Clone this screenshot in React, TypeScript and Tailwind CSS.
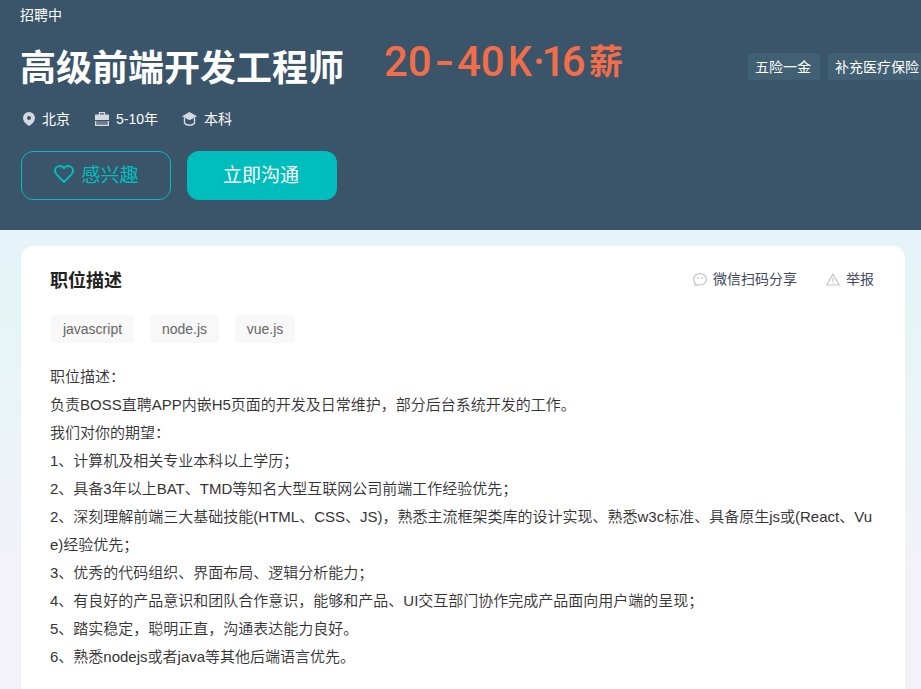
const skills = [
  { name: 'javascript', width: 'w-[83px]' },
  { name: 'node.js', width: 'w-[69px]' },
  { name: 'vue.js', width: 'w-[60px]' },
];

const description = [
  '职位描述：',
  '负责BOSS直聘APP内嵌H5页面的开发及日常维护，部分后台系统开发的工作。',
  '我们对你的期望：',
  '1、计算机及相关专业本科以上学历；',
  '2、具备3年以上BAT、TMD等知名大型互联网公司前端工作经验优先；',
  '2、深刻理解前端三大基础技能(HTML、CSS、JS)，熟悉主流框架类库的设计实现、熟悉w3c标准、具备原生js或(React、Vue)经验优先；',
  '3、优秀的代码组织、界面布局、逻辑分析能力；',
  '4、有良好的产品意识和团队合作意识，能够和产品、UI交互部门协作完成产品面向用户端的呈现；',
  '5、踏实稳定，聪明正直，沟通表达能力良好。',
  '6、熟悉nodejs或者java等其他后端语言优先。',
];

function PinIcon() {
  return (
    <svg width="12" height="14" viewBox="0 0 12 14" fill="#d3d9df">
      <path fillRule="evenodd" d="M6 0a6 6 0 0 1 6 6c0 3-2.200 5.200-4.200 6.700L6 14l-1.800-1.300C2.200 11.200 0 9 0 6a6 6 0 0 1 6-6Zm0 4a2 2 0 1 0 0 4 2 2 0 0 0 0-4Z" />
    </svg>
  );
}

function BriefcaseIcon() {
  return (
    <svg width="14" height="14" viewBox="0 0 14 14" fill="none" stroke="#d3d9df">
      <path d="M4.500 3V.6h5V3" strokeWidth="1.200" />
      <path d="M0 2.500h14V8H0Z" fill="#d3d9df" stroke="none" />
      <path d="M.6 9v4.400h12.800V9" strokeWidth="1.200" />
      <path d="M1 9h12v4H1Z" fill="#d3d9df" fillOpacity=".3" stroke="none" />
    </svg>
  );
}

function DegreeIcon() {
  return (
    <svg width="15" height="14" viewBox="0 0 15 14" fill="#d3d9df">
      <path d="M7.500 0 15 4.300 7.500 8.200 0 4.300Z" />
      <path d="M2.500 5.500v5.700c1.200 1.400 2.900 2 5 2s3.800-.6 5-2V5.500" fill="none" stroke="#d3d9df" strokeWidth="1.400" />
    </svg>
  );
}

function HeartIcon() {
  return (
    <svg width="20" height="18" viewBox="0 0 20 18" fill="none" stroke="#00bebd" strokeWidth="2" strokeLinejoin="round">
      <path d="M10 3.100C8.600 1.500 7.300 1 5.800 1 3.100 1 1 3.100 1 5.800c0 1.400.6 2.600 1.500 3.600L10 17l7.500-7.600c.9-1 1.500-2.200 1.500-3.600C19 3.100 16.900 1 14.200 1c-1.500 0-2.800.5-4.200 2.100Z" />
    </svg>
  );
}

function WechatIcon() {
  return (
    <svg width="14" height="13" viewBox="0 0 14 13" fill="none" stroke="#c4c4c4" strokeWidth="1.200">
      <path d="M2 12.200V10A5.600 5.600 0 0 1 .6 6.300C.6 3 3.400.6 7 .6s6.400 2.400 6.400 5.700S10.600 12 7 12c-1 0-1.700-.1-2.500-.4Z" strokeLinejoin="round" />
      <circle cx="4.700" cy="5.200" r=".9" fill="#c4c4c4" stroke="none" />
      <circle cx="9.300" cy="5.200" r=".9" fill="#c4c4c4" stroke="none" />
    </svg>
  );
}

function WarningIcon() {
  return (
    <svg width="14" height="13" viewBox="0 0 14 13" fill="none" stroke="#c4c4c4" strokeWidth="1.200">
      <path d="M7 1 13.300 12H.7Z" strokeLinejoin="round" />
      <path d="M7 4.500v4M7 9.500v1" />
    </svg>
  );
}

export default function App() {
  return (
    <div className="h-[689px] w-full overflow-hidden bg-[#f3f2f8] font-['Liberation_Sans','Noto_Sans_CJK_SC',sans-serif]">
      <header className="flex h-[230px] justify-between overflow-hidden bg-[#3a546a] pl-[21px] text-white">
        <div className="shrink-0">
          <div className="-ml-px mt-[5px] h-5 text-sm leading-5">招聘中</div>
          <div className="mt-[18px] flex h-[50px]">
            <h1 className="-ml-px w-[364px] text-[36px] leading-[52px] font-bold">高级前端开发工程师</h1>
            <div className="flex font-['Roboto','Noto_Sans_CJK_SC',sans-serif] text-[42px] leading-[38px] font-medium text-[#f26d49]">
              <span className="w-[49px]">20</span>
              <span className="w-[24px] scale-x-135 text-center">-</span>
              <span className="w-[51px]">40</span>
              <span className="w-[25px] origin-left scale-x-90">K</span>
              <span className="w-[56px] tracking-[-3.500px]">·16</span>
              <span className="text-[34px] leading-[38px] font-bold">薪</span>
            </div>
          </div>
          <div className="mt-[16px] flex h-5 items-center text-sm leading-5">
            <span className="flex w-[74px] items-center gap-[7px] pl-[2px]"><PinIcon />北京</span>
            <span className="flex w-[87px] items-center gap-[7px]"><BriefcaseIcon />5-10年</span>
            <span className="flex items-center gap-[7px]"><DegreeIcon />本科</span>
          </div>
          <div className="mt-[22px] flex gap-4">
            <button className="flex h-[49px] w-[150px] items-center justify-center gap-[7px] rounded-xl border border-[#00bebd] pb-[3px] pl-px text-[19px] text-[#00bebd]">
              <HeartIcon />
              <span className="pt-[4px]">感兴趣</span>
            </button>
            <button className="h-[49px] w-[150px] rounded-xl bg-[#00bebd] pt-px pr-[2px] text-[19px]">立即沟通</button>
          </div>
        </div>
        <div className="mt-[53px] flex h-[27px] w-[173px] gap-2 text-sm leading-[28px] whitespace-nowrap">
          <span className="w-[72px] shrink-0 rounded-sm bg-[#426073] pl-[7px]">五险一金</span>
          <span className="w-[98px] shrink-0 rounded-sm bg-[#426073] pl-[7px]">补充医疗保险</span>
        </div>
      </header>

      <main className="h-[459px] bg-[linear-gradient(#e3f3f8,#e5f5f6_20%,#f3f2f8_75%)] pt-4 pr-4 pl-[21px]">
        <section className="h-full rounded-t-xl bg-white px-[30px]">
          <div className="-ml-px flex items-center justify-between pt-[20px]">
            <h2 className="pt-px text-lg leading-7 font-bold text-[#222]">职位描述</h2>
            <div className="-mt-[3px] flex pr-px text-sm leading-7 text-[#414a60]">
              <span className="flex items-center gap-[6px]"><WechatIcon />微信扫码分享</span>
              <span className="ml-[29px] flex items-center gap-[6px]"><WarningIcon />举报</span>
            </div>
          </div>
          <div className="mt-[20px] flex gap-4 text-sm leading-7 text-[#666]">
            {skills.map((skill) => (
              <span key={skill.name} className={`h-7 rounded-sm bg-[#f8f8f8] text-center ${skill.width}`}>
                {skill.name}
              </span>
            ))}
          </div>
          <div className="-ml-px mt-[20px] text-[15px] leading-7 font-[350] break-all text-[#333]">
            {description.map((line, i) => (
              <p key={i}>{line}</p>
            ))}
          </div>
        </section>
      </main>
    </div>
  );
}
